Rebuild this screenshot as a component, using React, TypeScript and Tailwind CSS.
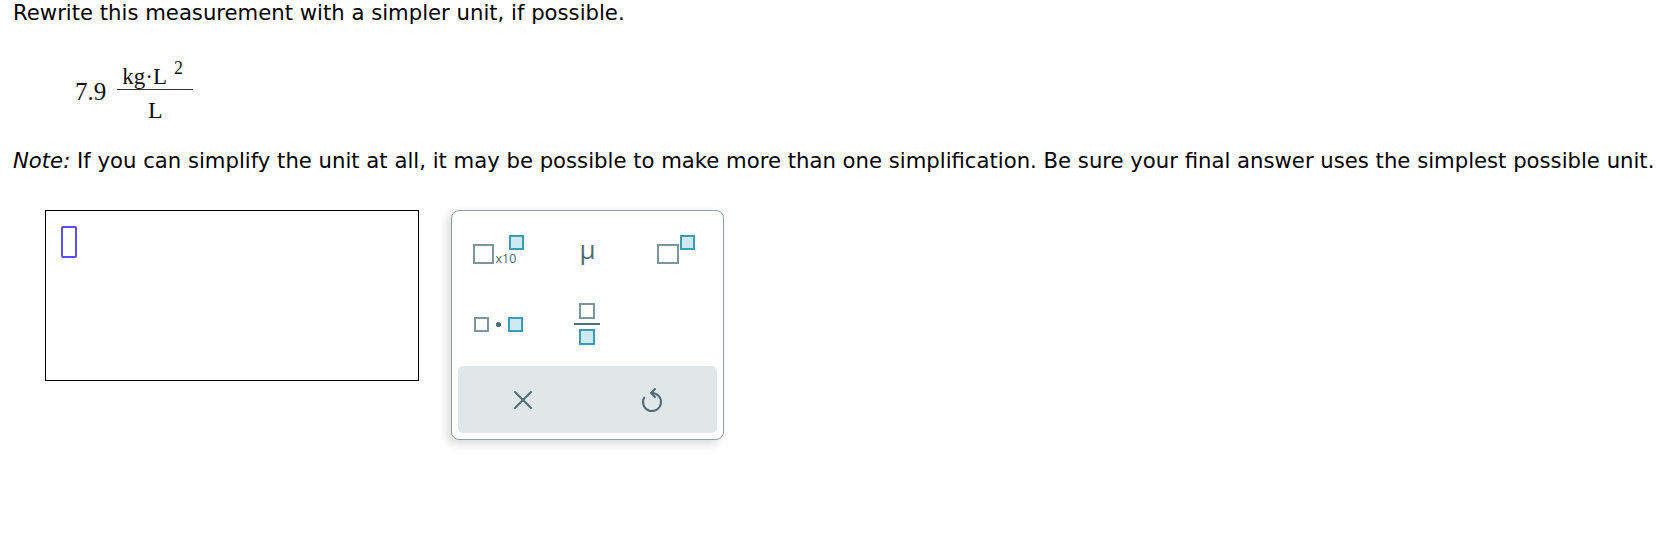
import React from "react";

function X10Icon() {
  return (
    <svg width="52" height="30" viewBox="0 0 52 30">
      <rect x="1" y="10" width="19" height="18" fill="#ffffff" stroke="#7f959d" strokeWidth="2" />
      <text x="22.5" y="27.5" fontSize="12.5" fill="#4f6b76" fontFamily="'Open Sans', 'Liberation Sans', sans-serif">x10</text>
      <rect x="37" y="1" width="13" height="13" fill="#cde9f1" stroke="#3a9db5" strokeWidth="2" />
    </svg>
  );
}

function SupIcon() {
  return (
    <svg width="38" height="30" viewBox="0 0 38 30">
      <rect x="1" y="10" width="20" height="18" fill="#ffffff" stroke="#7f959d" strokeWidth="2" />
      <rect x="24" y="1" width="13" height="13" fill="#cde9f1" stroke="#3a9db5" strokeWidth="2" />
    </svg>
  );
}

function DotIcon() {
  return (
    <svg width="50" height="15" viewBox="0 0 50 15">
      <rect x="1" y="1" width="13" height="13" fill="#ffffff" stroke="#7f959d" strokeWidth="2" />
      <circle cx="24.5" cy="7.5" r="2.6" fill="#4f6b76" />
      <rect x="35" y="1" width="13" height="13" fill="#cde9f1" stroke="#3a9db5" strokeWidth="2" />
    </svg>
  );
}

function FracIcon() {
  return (
    <svg width="26" height="42" viewBox="0 0 26 42">
      <rect x="6" y="1" width="14" height="14" fill="#ffffff" stroke="#7f959d" strokeWidth="2" />
      <line x1="0" y1="21" x2="26" y2="21" stroke="#4f6b76" strokeWidth="2" />
      <rect x="6" y="27" width="14" height="14" fill="#cde9f1" stroke="#3a9db5" strokeWidth="2" />
    </svg>
  );
}

function CloseIcon() {
  return (
    <svg width="20" height="20" viewBox="0 0 20 20">
      <path d="M2 2 L18 18 M18 2 L2 18" stroke="#4f6b76" strokeWidth="2" strokeLinecap="round" fill="none" />
    </svg>
  );
}

function UndoIcon() {
  return (
    <svg width="22" height="26" viewBox="0 0 22 26">
      <path d="M11 6 A9 9 0 1 1 3.2 10.5" stroke="#4f6b76" strokeWidth="2" fill="none" strokeLinecap="round" />
      <path d="M14 2 L10 6 L14 10" stroke="#4f6b76" strokeWidth="2" fill="none" strokeLinecap="round" strokeLinejoin="round" />
    </svg>
  );
}

export default function App() {
  return (
    <div className="w-[1662px] h-[550px] bg-white text-black font-['DejaVu_Sans',sans-serif] overflow-hidden">
      <div className="pl-[13px] pt-[1px] h-[25px] leading-[24px] text-[21.2px] whitespace-nowrap">
        Rewrite this measurement with a simpler unit, if possible.
      </div>

      <div className="mt-[44px] ml-[75px] flex items-start font-['Liberation_Serif',serif] text-[#111]">
        <div className="mt-[10px] text-[25px] leading-[25px]">7.9</div>
        <div className="ml-[11px] w-[76px] flex flex-col">
          <div className="h-[20px] flex items-start pl-[5px] text-[23px]">
            <span className="leading-[16px]">kg</span>
            <span className="leading-[16px]">·</span>
            <span className="leading-[16px]">L</span>
            <span className="ml-[7px] mt-[-10px] text-[18px] leading-[18px]">2</span>
          </div>
          <div className="h-[1px] bg-[#333]" />
          <div className="h-[40px] leading-[40px] text-center text-[24px]">L</div>
        </div>
      </div>

      <div className="mt-[19px] pl-[13px] h-[24px] leading-[24px] text-[21.2px] whitespace-nowrap">
        <i>Note:</i> If you can simplify the unit at all, it may be possible to make more than one simplification. Be sure your final answer uses the simplest possible unit.
      </div>

      <div className="mt-[37px] pl-[45px] flex items-start gap-[32px]">
        <div className="w-[374px] h-[171px] border border-black pl-[15px] pt-[15px]">
          <div className="w-[16px] h-[32px] rounded-[2px] border-2 border-[#5b4cff]" />
        </div>

        <div className="w-[273px] h-[230px] rounded-[8px] border border-[#8da0a8] bg-white p-[6px] flex flex-col shadow-[-4px_4px_10px_rgba(0,0,0,0.14)]">
          <div className="grid grid-cols-3 h-[62px]">
            <div className="flex items-center justify-center pr-[4px] pt-[3px]">
              <X10Icon />
            </div>
            <div className="flex items-center justify-center">
              <span className="font-['Open_Sans',sans-serif] text-[26px] leading-[26px] text-[#4f6b76] mt-[2px]">μ</span>
            </div>
            <div className="flex items-center justify-center pl-[4px] pt-[3px]">
              <SupIcon />
            </div>
          </div>
          <div className="grid grid-cols-3 h-[62px] mt-[14px]">
            <div className="flex items-center justify-center pr-[5px]">
              <DotIcon />
            </div>
            <div className="flex items-center justify-center">
              <FracIcon />
            </div>
            <div />
          </div>
          <div className="mt-[11px] h-[67px] rounded-[5px] bg-[#e1e6e9] grid grid-cols-2">
            <div className="flex items-center justify-center">
              <CloseIcon />
            </div>
            <div className="flex items-center justify-center">
              <UndoIcon />
            </div>
          </div>
        </div>
      </div>
    </div>
  );
}
